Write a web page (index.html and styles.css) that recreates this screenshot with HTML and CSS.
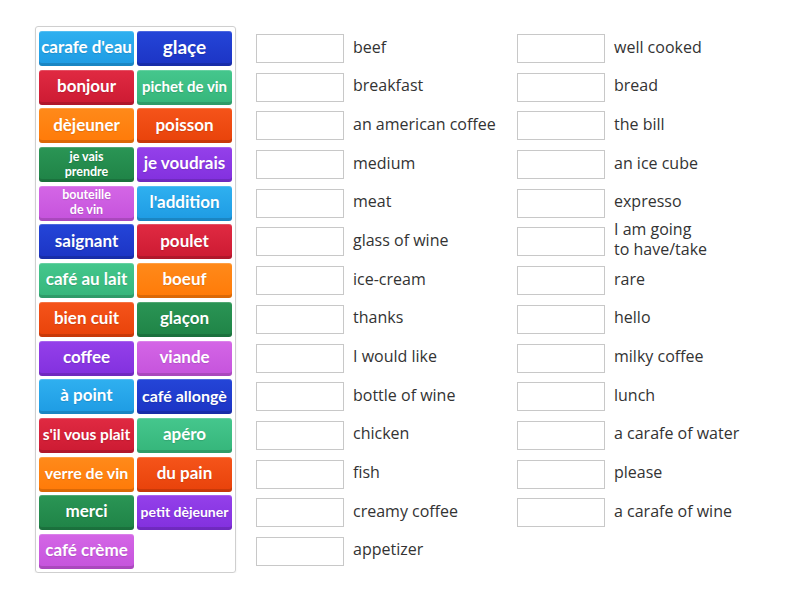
FILE: index.html
```html
<!DOCTYPE html>
<html>
<head>
<meta charset="utf-8">
<link rel="stylesheet" href="styles.css">
</head>
<body>
<div class="page">
  <div class="panel">
    <div class="tile c1">carafe d'eau</div>
    <div class="tile c2 big">glaçe</div>
    <div class="tile c3">bonjour</div>
    <div class="tile c4 s15">pichet de vin</div>
    <div class="tile c5">dèjeuner</div>
    <div class="tile c6">poisson</div>
    <div class="tile c7 s12">je vais<br>prendre</div>
    <div class="tile c8">je voudrais</div>
    <div class="tile c9 s12">bouteille<br>de vin</div>
    <div class="tile c1">l'addition</div>
    <div class="tile c2">saignant</div>
    <div class="tile c3">poulet</div>
    <div class="tile c4">café au lait</div>
    <div class="tile c5">boeuf</div>
    <div class="tile c6">bien cuit</div>
    <div class="tile c7">glaçon</div>
    <div class="tile c8">coffee</div>
    <div class="tile c9">viande</div>
    <div class="tile c1">à point</div>
    <div class="tile c2 s16">café allongè</div>
    <div class="tile c3 s155">s'il vous plait</div>
    <div class="tile c4">apéro</div>
    <div class="tile c5 s16">verre de vin</div>
    <div class="tile c6">du pain</div>
    <div class="tile c7">merci</div>
    <div class="tile c8 s14">petit dèjeuner</div>
    <div class="tile c9">café crème</div>
  </div>
  <div class="targets">
    <div class="col">
      <div class="row"><div class="box"></div><div class="label">beef</div></div>
      <div class="row"><div class="box"></div><div class="label">breakfast</div></div>
      <div class="row"><div class="box"></div><div class="label">an american coffee</div></div>
      <div class="row"><div class="box"></div><div class="label">medium</div></div>
      <div class="row"><div class="box"></div><div class="label">meat</div></div>
      <div class="row"><div class="box"></div><div class="label">glass of wine</div></div>
      <div class="row"><div class="box"></div><div class="label">ice-cream</div></div>
      <div class="row"><div class="box"></div><div class="label">thanks</div></div>
      <div class="row"><div class="box"></div><div class="label">I would like</div></div>
      <div class="row"><div class="box"></div><div class="label">bottle of wine</div></div>
      <div class="row"><div class="box"></div><div class="label">chicken</div></div>
      <div class="row"><div class="box"></div><div class="label">fish</div></div>
      <div class="row"><div class="box"></div><div class="label">creamy coffee</div></div>
      <div class="row"><div class="box"></div><div class="label">appetizer</div></div>
    </div>
    <div class="col">
      <div class="row"><div class="box"></div><div class="label">well cooked</div></div>
      <div class="row"><div class="box"></div><div class="label">bread</div></div>
      <div class="row"><div class="box"></div><div class="label">the bill</div></div>
      <div class="row"><div class="box"></div><div class="label">an ice cube</div></div>
      <div class="row"><div class="box"></div><div class="label">expresso</div></div>
      <div class="row"><div class="box"></div><div class="label two">I am going<br>to have/take</div></div>
      <div class="row"><div class="box"></div><div class="label">rare</div></div>
      <div class="row"><div class="box"></div><div class="label">hello</div></div>
      <div class="row"><div class="box"></div><div class="label">milky coffee</div></div>
      <div class="row"><div class="box"></div><div class="label">lunch</div></div>
      <div class="row"><div class="box"></div><div class="label">a carafe of water</div></div>
      <div class="row"><div class="box"></div><div class="label">please</div></div>
      <div class="row"><div class="box"></div><div class="label">a carafe of wine</div></div>
    </div>
  </div>
</div>
</body>
</html>
```

FILE: styles.css
```css
html, body {
  margin: 0;
  padding: 0;
  background: #ffffff;
}

.page {
  display: flex;
  align-items: flex-start;
  padding: 26px 0 0 35px;
  font-family: Lato, "Open Sans", sans-serif;
}

.panel {
  display: grid;
  grid-template-columns: 95px 95px;
  grid-auto-rows: 35px;
  column-gap: 3px;
  row-gap: 3.7px;
  padding: 4px 3px 3px 3px;
  border: 1px solid #cfcfcf;
  border-radius: 3px;
  box-shadow: 0 1px 2px rgba(0,0,0,0.08);
}

.tile {
  display: flex;
  align-items: center;
  justify-content: center;
  text-align: center;
  color: #ffffff;
  font-weight: 700;
  font-size: 17px;
  line-height: 1.1;
  border-radius: 3px;
  box-shadow: inset 0 -3px 0 rgba(0,0,0,0.14), inset 0 1px 0 rgba(255,255,255,0.18);
  white-space: nowrap;
  overflow: hidden;
  padding-bottom: 2px;
  box-sizing: border-box;
  text-shadow: 0 1px 1px rgba(0,0,0,0.12);
}

.big { font-size: 19px; }
.s16 { font-size: 16px; }
.s155 { font-size: 15.5px; }
.s15 { font-size: 15px; }
.s14 { font-size: 14px; }
.s12 { font-size: 12.5px; line-height: 1.2; }

.c1 { background: linear-gradient(#2fb0f0, #1e9be3); }
.c2 { background: linear-gradient(#2445d8, #1c34c4); }
.c3 { background: linear-gradient(#e02a42, #cc1a32); }
.c4 { background: linear-gradient(#45c78d, #35b57a); }
.c5 { background: linear-gradient(#ff8a1a, #ff7a08); }
.c6 { background: linear-gradient(#f5541a, #e8420a); }
.c7 { background: linear-gradient(#2a9555, #1f8346); }
.c8 { background: linear-gradient(#9440ea, #8230de); }
.c9 { background: linear-gradient(#d466e6, #c553dc); }

.targets {
  display: flex;
  margin-left: 20px;
  padding-top: 8px;
}

.col {
  display: grid;
  grid-auto-rows: 29px;
  row-gap: 9.7px;
  width: 261px;
}

.row {
  display: flex;
  align-items: center;
}

.box {
  flex: none;
  width: 86px;
  height: 27px;
  border: 1px solid #c8c8c8;
  background: #ffffff;
}

.label {
  margin-left: 9px;
  margin-top: -4px;
  font-family: "Open Sans", Lato, sans-serif;
  font-size: 16px;
  color: #333333;
  white-space: nowrap;
  line-height: 1.25;
}

.label.two {
  line-height: 1.3;
  margin-top: -5px;
}
```
